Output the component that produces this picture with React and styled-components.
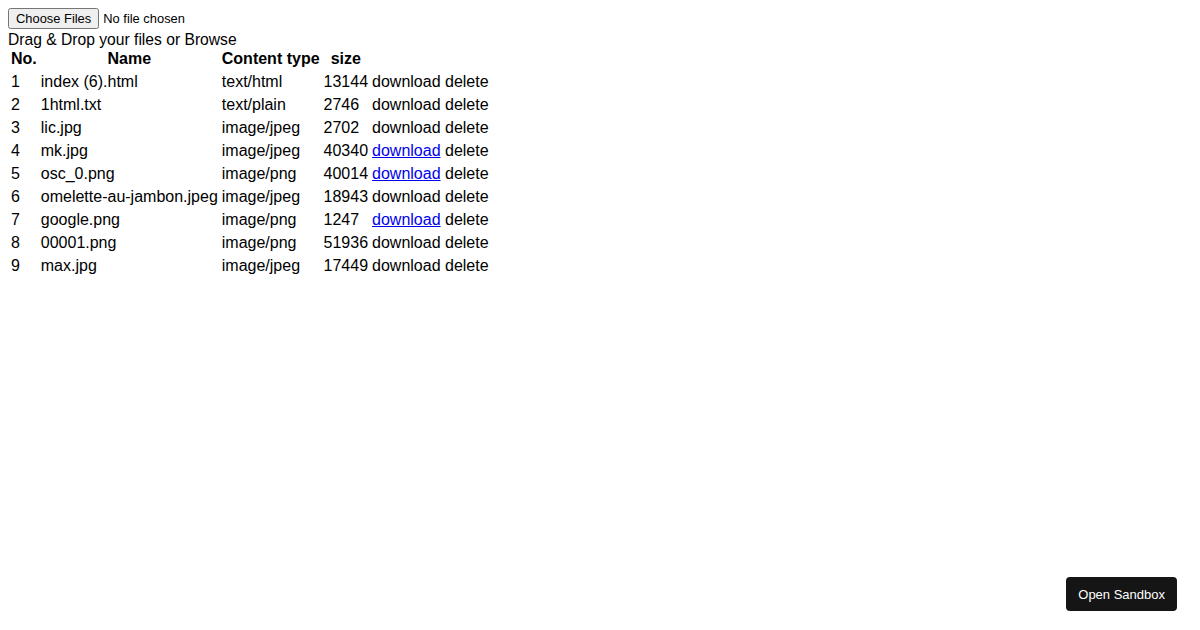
import React from 'react';
import styled, { createGlobalStyle } from 'styled-components';

const GlobalStyle = createGlobalStyle`
  body {
    margin: 8px;
    font-family: "Liberation Sans", Arial, sans-serif;
    font-size: 16px;
    color: #000;
    background: #fff;
  }
`;

const Page = styled.div`
  display: flex;
  flex-direction: column;
  align-items: flex-start;
`;

const FileInput = styled.input`
  font-family: "Liberation Sans", Arial, sans-serif;
  font-size: 12.9px;
`;

const DropText = styled.div`
  padding-top: 4px;
  font-size: 15.65px;
  line-height: 14px;
  margin-bottom: -1px;
`;

const Table = styled.table`
  border-spacing: 2px;
`;

const HeadCell = styled.th`
  padding: 1px;
  line-height: 19px;
  font-weight: bold;
`;

const Cell = styled.td`
  padding: 1px;
  line-height: 19px;
  text-align: left;
`;

const Action = styled.span`
  color: ${(p) => (p.$link ? '#0000ee' : '#000')};
  text-decoration: ${(p) => (p.$link ? 'underline' : 'none')};
  cursor: pointer;
`;

const SandboxButton = styled.button`
  position: fixed;
  right: 23px;
  bottom: 19px;
  height: 34px;
  padding: 0 12px;
  border: none;
  border-radius: 4px;
  background: #151515;
  color: #fff;
  font-family: "Liberation Sans", Arial, sans-serif;
  font-size: 13px;
`;

const files = [
  { name: 'index (6).html', type: 'text/html', size: 13144 },
  { name: '1html.txt', type: 'text/plain', size: 2746 },
  { name: 'lic.jpg', type: 'image/jpeg', size: 2702 },
  { name: 'mk.jpg', type: 'image/jpeg', size: 40340, link: true },
  { name: 'osc_0.png', type: 'image/png', size: 40014, link: true },
  { name: 'omelette-au-jambon.jpeg', type: 'image/jpeg', size: 18943 },
  { name: 'google.png', type: 'image/png', size: 1247, link: true },
  { name: '00001.png', type: 'image/png', size: 51936 },
  { name: 'max.jpg', type: 'image/jpeg', size: 17449 },
];

const App = () => {
  return (
    <Page>
      <GlobalStyle />
      <FileInput type="file" multiple />
      <DropText>Drag &amp; Drop your files or Browse</DropText>
      <Table>
        <thead>
          <tr>
            <HeadCell>No.</HeadCell>
            <HeadCell>Name</HeadCell>
            <HeadCell>Content type</HeadCell>
            <HeadCell>size</HeadCell>
          </tr>
        </thead>
        <tbody>
          {files.map((f, i) => (
            <tr key={f.name}>
              <Cell>{i + 1}</Cell>
              <Cell>{f.name}</Cell>
              <Cell>{f.type}</Cell>
              <Cell>{f.size}</Cell>
              <Cell>
                <Action $link={f.link}>download</Action> <Action>delete</Action>
              </Cell>
            </tr>
          ))}
        </tbody>
      </Table>
      <SandboxButton>Open Sandbox</SandboxButton>
    </Page>
  );
};

export default App;
